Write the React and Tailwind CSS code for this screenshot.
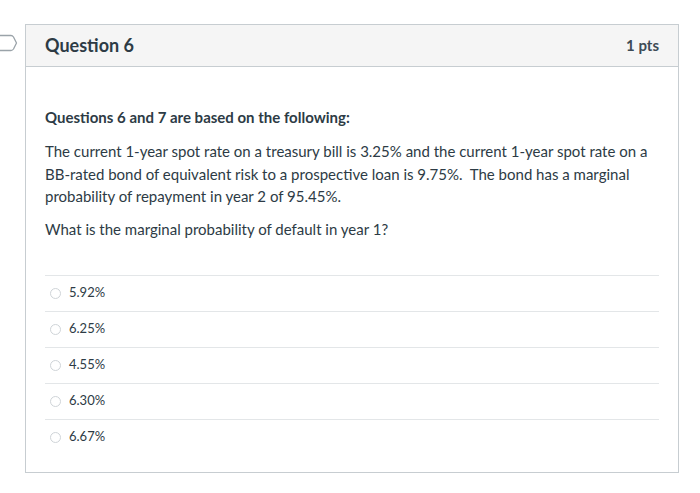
import React from "react";

const options = ["5.92%", "6.25%", "4.55%", "6.30%", "6.67%"];

const App = () => {
  return (
    <div className="relative w-[700px] h-[493px] bg-white text-[#2d3b45] font-['Lato',_'Liberation_Sans',_sans-serif]">
      <svg className="absolute left-0 top-[34px]" width="20" height="18" viewBox="0 0 20 18">
        <path d="M-4 1.5 H11 Q12.5 1.5 13.5 3 L16.5 9 L13.5 15 Q12.5 16.5 11 16.5 H-4" fill="none" stroke="#9aa3a9" strokeWidth="1.3" strokeLinejoin="round" />
      </svg>
      <div className="pt-[24px] pl-[25px]">
        <div className="w-[654px] h-[449px] border border-[#c7cdd1]">
          <div className="h-[42px] bg-[#f5f5f5] border-b border-[#c7cdd1] flex items-center justify-between px-[19px]">
            <h2 className="text-[18px] font-bold">Question 6</h2>
            <span className="text-[15px] font-bold text-[#3d4b55]">1 pts</span>
          </div>
          <div className="px-[19px] pt-[39px]">
            <p className="text-[15px] font-bold leading-[22px]">Questions 6 and 7 are based on the following:</p>
            <p className="mt-[12px] text-[15px] leading-[22.5px]">
              The current 1-year spot rate on a treasury bill is 3.25% and the current 1-year spot rate on a
              BB-rated bond of equivalent risk to a prospective loan is 9.75%.&nbsp; The bond has a marginal
              probability of repayment in year 2 of 95.45%.
            </p>
            <p className="mt-[10px] text-[15px] leading-[22px]">What is the marginal probability of default in year 1?</p>
            <ul className="mt-[35px]">
              {options.map((o) => (
                <li key={o} className="h-[36px] border-t border-[#e3e6e8] flex items-center pl-[5px] gap-[8px] text-[13px]">
                  <span className="w-[11px] h-[11px] rounded-full border border-[#cfd4d8] bg-white" />
                  <span>{o}</span>
                </li>
              ))}
            </ul>
          </div>
        </div>
      </div>
    </div>
  );
};

export default App;
